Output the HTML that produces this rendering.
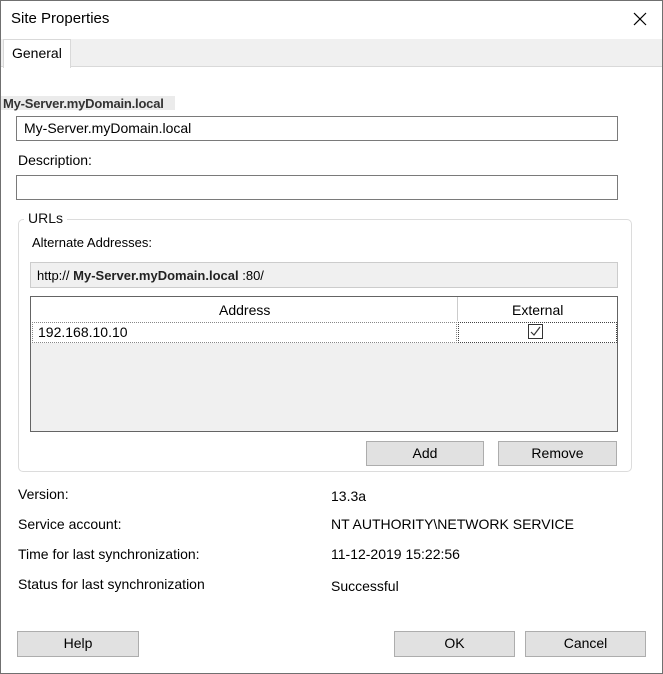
<!DOCTYPE html><html><head><style>
*{box-sizing:border-box;margin:0;padding:0}
body{width:663px;height:674px;background:#fff;font-family:"Liberation Sans",sans-serif;font-size:14px;color:#000;position:relative;overflow:hidden}
.a{position:absolute}
.win{left:0;top:0;width:663px;height:674px;border:1px solid #707070}
.btn{position:absolute;background:#e1e1e1;border:1px solid #adadad;text-align:center;line-height:23px;font-size:14px}
.tb{position:absolute;border:1px solid #7a7a7a;background:#fff;padding-left:7px;line-height:22px}
</style></head><body>
<div class="a win"></div>
<div class="a" style="left:11px;top:10px;font-size:15px">Site Properties</div>
<svg class="a" style="left:633px;top:12px" width="14" height="14"><path d="M1 1 L13 13 M13 1 L1 13" stroke="#000" stroke-width="1.2"/></svg>
<div class="a" style="left:1px;top:39px;width:661px;height:28px;background:#f0f0f0;border-bottom:1px solid #d9d9d9"></div>
<div class="a" style="left:3px;top:39px;width:68px;height:29px;background:#fff;border:1px solid #d9d9d9;border-bottom:none;padding:5px 0 0 8px">General</div>
<div class="a" style="left:1px;top:96px;width:174px;height:14px;background:#ebebeb"></div>
<div class="a" style="left:3px;top:96px;font-size:13px;font-weight:bold;color:#333;letter-spacing:-0.2px">My-Server.myDomain.local</div>
<div class="tb" style="left:16px;top:116px;width:602px;height:25px">My-Server.myDomain.local</div>
<div class="a" style="left:18px;top:152px">Description:</div>
<div class="tb" style="left:16px;top:175px;width:602px;height:25px"></div>
<div class="a" style="left:18px;top:219px;width:614px;height:253px;border:1px solid #dcdcdc;border-radius:5px"></div>
<div class="a" style="left:24px;top:210px;background:#fff;padding:0 4px;color:#111">URLs</div>
<div class="a" style="left:32px;top:235px;font-size:13px">Alternate Addresses:</div>
<div class="a" style="left:30px;top:262px;width:588px;height:26px;background:#f0f0f0;border:1px solid #ccc;padding:5px 0 0 6px;font-size:13px">http:// <b style="font-weight:bold;color:#222">My-Server.myDomain.local</b> :80/</div>
<div class="a" style="left:30px;top:296px;width:588px;height:136px;background:#f0f0f0;border:1px solid #646464"></div>
<div class="a" style="left:31px;top:297px;width:586px;height:24px;background:#fff"></div>
<div class="a" style="left:457px;top:297px;width:1px;height:24px;background:#ccc"></div>
<div class="a" style="left:219px;top:302px;font-size:14px">Address</div>
<div class="a" style="left:512px;top:302px;font-size:14px">External</div>
<div class="a" style="left:31px;top:321px;width:586px;height:22px;background:#fff"></div>
<div class="a" style="left:32px;top:322px;width:425px;height:21px;border:1px dotted #888;padding:0 0 0 5px;line-height:19px">192.168.10.10</div>
<div class="a" style="left:458px;top:322px;width:159px;height:21px;border:1px dotted #444"></div>
<div class="a" style="left:528px;top:324px;width:15px;height:15px;border:1px solid #333;background:#fff"><svg width="13" height="13" style="position:absolute;left:0;top:0"><path d="M2 7 L5 10 L11 2" stroke="#333" stroke-width="1.2" fill="none"/></svg></div>
<div class="btn" style="left:366px;top:441px;width:118px;height:25px">Add</div>
<div class="btn" style="left:498px;top:441px;width:119px;height:25px">Remove</div>
<div class="a" style="left:18px;top:486px;font-size:14px">Version:</div>
<div class="a" style="left:331px;top:488px">13.3a</div>
<div class="a" style="left:18px;top:516px">Service account:</div>
<div class="a" style="left:331px;top:516px">NT AUTHORITY\NETWORK SERVICE</div>
<div class="a" style="left:18px;top:546px">Time for last synchronization:</div>
<div class="a" style="left:331px;top:546px">11-12-2019 15:22:56</div>
<div class="a" style="left:18px;top:576px">Status for last synchronization</div>
<div class="a" style="left:331px;top:578px">Successful</div>
<div class="btn" style="left:17px;top:631px;width:122px;height:26px">Help</div>
<div class="btn" style="left:394px;top:631px;width:121px;height:26px">OK</div>
<div class="btn" style="left:525px;top:631px;width:121px;height:26px">Cancel</div>
</body></html>
